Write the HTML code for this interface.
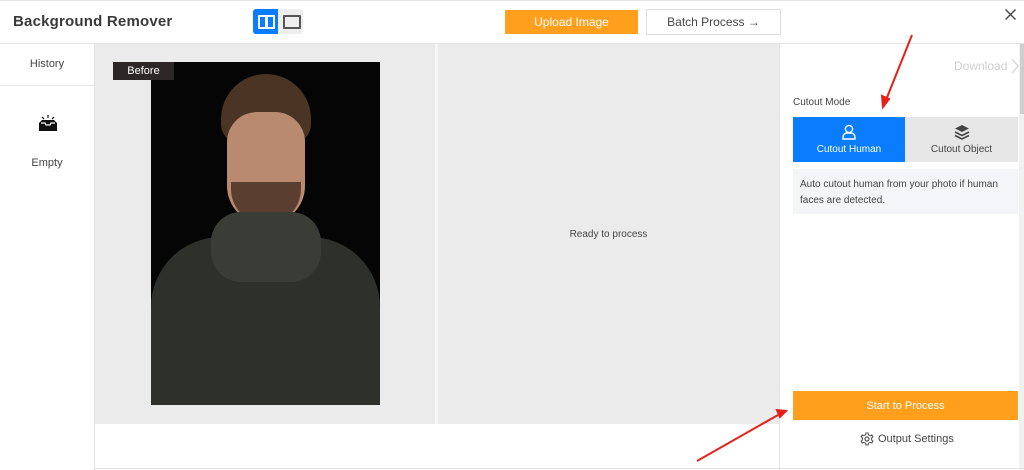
<!DOCTYPE html>
<html><head><style>
body{margin:0;width:1024px;height:470px;position:relative;overflow:hidden;font-family:"Liberation Sans",sans-serif;background:#fff}
.a{position:absolute}
</style></head><body>
<div class="a" style="left:0;top:0;width:1024px;height:1px;background:#e6e6e6"></div>
<div class="a" style="left:13px;top:13px;font-size:15px;font-weight:bold;color:#3a3a3a;letter-spacing:0.2px">Background Remover</div>
<div class="a" style="left:253px;top:9px;width:50px;height:25px;background:#eee;border-radius:3px"></div>
<div class="a" style="left:253px;top:9px;width:25px;height:25px;background:#0a7cff;border-radius:3px 0 0 3px"></div>
<div class="a" style="left:258px;top:15px;width:5px;height:10px;border:2px solid #fff;border-radius:1px"></div>
<div class="a" style="left:266px;top:15px;width:5px;height:10px;border:2px solid #fff;border-radius:1px"></div>
<div class="a" style="left:283px;top:15px;width:14px;height:10px;border:2px solid #555;border-radius:1px"></div>
<div class="a" style="left:505px;top:10px;width:133px;height:24px;background:#ff9f1c;color:#fff;font-size:12px;text-align:center;line-height:24px">Upload Image</div>
<div class="a" style="left:646px;top:9px;width:133px;height:24px;border:1px solid #ddd;color:#444;font-size:12px;text-align:center;line-height:24px">Batch Process →</div>
<svg class="a" style="left:1005px;top:9px" width="11" height="11" viewBox="0 0 11 11"><path d="M0.5 0.5l10 10M10.5 0.5l-10 10" stroke="#444" stroke-width="1.4"/></svg>
<div class="a" style="left:0;top:43px;width:1024px;height:1px;background:#e3e3e3"></div>
<div class="a" style="left:94px;top:44px;width:1px;height:426px;background:#e3e3e3"></div>
<div class="a" style="left:0;top:58px;width:94px;text-align:center;font-size:11px;color:#444">History</div>
<div class="a" style="left:0;top:85px;width:94px;height:1px;background:#e6e6e6"></div>
<svg class="a" style="left:37px;top:114px" width="22" height="18" viewBox="0 0 22 18"><path d="M11 1v3M5 3l2 2M17 3l-2 2" stroke="#222" stroke-width="1.3"/><path d="M2 9l3-3h12l3 3v8H2z" fill="#111"/><path d="M4 9h4l1 2h4l1-2h4" stroke="#fff" stroke-width="1.2" fill="none"/></svg>
<div class="a" style="left:0;top:157px;width:94px;text-align:center;font-size:11px;color:#444">Empty</div>
<div class="a" style="left:95px;top:44px;width:684px;height:380px;background:#ebebeb"></div>
<div class="a" style="left:435px;top:44px;width:3px;height:380px;background:#f5f5f5"></div>
<div class="a" style="left:151px;top:62px;width:229px;height:343px;background:#050505;overflow:hidden">
<div class="a" style="left:70px;top:12px;width:90px;height:70px;border-radius:45px 45px 20px 20px;background:#4a3424"></div>
<div class="a" style="left:76px;top:50px;width:78px;height:112px;border-radius:30px 30px 38px 38px;background:#b98a70"></div>
<div class="a" style="left:80px;top:120px;width:70px;height:42px;border-radius:0 0 35px 35px;background:#5a3f30"></div>
<div class="a" style="left:0;top:175px;width:229px;height:190px;border-radius:70px 70px 0 0;background:#2e302b"></div>
<div class="a" style="left:60px;top:150px;width:110px;height:70px;border-radius:30px;background:#3a3c36"></div>
</div>
<div class="a" style="left:113px;top:62px;width:61px;height:18px;background:#2d2727;color:#fff;font-size:11px;text-align:center;line-height:18px">Before</div>
<div class="a" style="left:438px;top:229px;width:341px;text-align:center;font-size:10px;color:#444">Ready to process</div>
<div class="a" style="left:779px;top:44px;width:1px;height:426px;background:#e3e3e3"></div>
<div class="a" style="left:1019px;top:44px;width:5px;height:426px;background:#f1f1f1"></div>
<div class="a" style="left:1020px;top:44px;width:4px;height:70px;background:#cfcfcf"></div>
<div class="a" style="left:954px;top:59px;font-size:12px;color:#cfcfcf">Download</div>
<svg class="a" style="left:1011px;top:58px" width="8" height="16" viewBox="0 0 8 16"><path d="M1 1l6 7-6 7" stroke="#d5d5d5" stroke-width="1.3" fill="none"/></svg>
<div class="a" style="left:793px;top:97px;font-size:10px;color:#444">Cutout Mode</div>
<div class="a" style="left:793px;top:117px;width:112px;height:45px;background:#0a7cff;color:#fff;font-size:10px;text-align:center">
<svg style="margin-top:7px" width="14" height="16" viewBox="0 0 14 16"><circle cx="7" cy="5" r="3.6" fill="none" stroke="#fff" stroke-width="1.4"/><path d="M1 15v-2a4 4 0 0 1 4-4h4a4 4 0 0 1 4 4v2z" fill="none" stroke="#fff" stroke-width="1.4"/></svg><div style="margin-top:1px">Cutout Human</div></div>
<div class="a" style="left:905px;top:117px;width:113px;height:45px;background:#e6e6e6;color:#444;font-size:10px;text-align:center">
<svg style="margin-top:7px" width="16" height="16" viewBox="0 0 16 16"><path d="M8 1l7 3.5-7 3.5-7-3.5z" fill="#444"/><path d="M1 8l7 3.5 7-3.5M1 11.5l7 3.5 7-3.5" fill="none" stroke="#444" stroke-width="1.6"/></svg><div style="margin-top:1px">Cutout Object</div></div>
<div class="a" style="left:793px;top:169px;width:225px;height:45px;background:#f3f5f9"></div>
<div class="a" style="left:800px;top:177px;width:210px;font-size:10px;line-height:16px;color:#444">Auto cutout human from your photo if human faces are detected.</div>
<div class="a" style="left:793px;top:391px;width:225px;height:29px;background:#ff9f1c;color:#fff;font-size:11px;text-align:center;line-height:30px">Start to Process</div>
<svg class="a" style="left:860px;top:432px" width="14" height="14" viewBox="0 0 14 14"><circle cx="7" cy="7" r="2" fill="none" stroke="#555" stroke-width="1.2"/><path d="M6 1h2l.5 1.8 1.6.9 1.8-.6 1 1.7-1.3 1.3v1.8l1.3 1.3-1 1.7-1.8-.6-1.6.9L8 13H6l-.5-1.8-1.6-.9-1.8.6-1-1.7L2.4 7.9V6.1L1.1 4.8l1-1.7 1.8.6 1.6-.9z" fill="none" stroke="#555" stroke-width="1.1"/></svg>
<div class="a" style="left:878px;top:433px;font-size:11px;color:#444">Output Settings</div>
<div class="a" style="left:95px;top:468px;width:929px;height:1px;background:#e3e3e3"></div>
<svg class="a" style="left:0;top:0" width="1024" height="470"><g stroke="#e8201a" stroke-width="2" fill="#e8201a"><line x1="912" y1="35" x2="886" y2="100"/><path d="M883 107l-1-11 7 3z"/><line x1="697" y1="461" x2="778" y2="415"/><path d="M786 411l-9-1 3 7z"/></g></svg>
</body></html>
